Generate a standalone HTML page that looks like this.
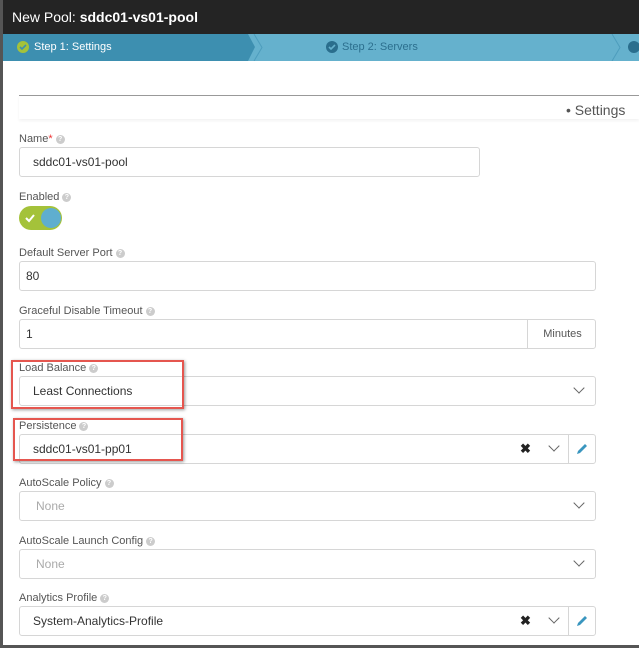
<!DOCTYPE html>
<html><head><style>
*{box-sizing:border-box;margin:0;padding:0}
body{width:639px;height:648px;overflow:hidden;background:#fff;font-family:"Liberation Sans",sans-serif;position:relative}
.a{position:absolute}
.lbl{position:absolute;left:19px;font-size:11px;color:#555}
.q{display:inline-block;width:9px;height:9px;border-radius:50%;background:#ccc;color:#fff;font-size:7px;line-height:9px;text-align:center;margin-left:3px;vertical-align:1px;font-weight:bold}
.in{position:absolute;left:19px;width:577px;height:30px;border:1px solid #d6d6d6;border-radius:3px;font-size:12px;color:#333;line-height:28px;padding-left:13px}
.chev{position:absolute;top:7px;width:8px;height:8px;border-right:1.3px solid #666;border-bottom:1.3px solid #666;transform:rotate(45deg)}
.red{position:absolute;border:2px solid #e5564f;box-shadow:1px 1px 3px rgba(0,0,0,.4)}
</style></head><body>
<div class="a" style="left:0;top:0;width:639px;height:34px;background:#242424"></div>
<div class="a" style="left:12px;top:9px;color:#fff;font-size:14px">New Pool: <b>sddc01-vs01-pool</b></div>
<div class="a" style="left:0;top:34px;width:639px;height:27px;background:#65b1cd"></div>
<div class="a" style="left:0;top:34px;width:255px;height:27px;background:#3d8fb0;clip-path:polygon(0 0,248px 0,255px 13px,248px 27px,0 27px)"></div>
<svg class="a" style="left:252px;top:34px" width="12" height="27"><path d="M2 0 L10 13.5 L2 27" stroke="#4d9dbd" fill="none"/></svg>
<svg class="a" style="left:610px;top:34px" width="12" height="27"><path d="M2 0 L10 13.5 L2 27" stroke="#4d9dbd" fill="none"/></svg>
<svg class="a" style="left:17px;top:41px" width="12" height="12"><circle cx="6" cy="6" r="6" fill="#a4c23a"/><path d="M3 6l2 2 4-4" stroke="#3d8fb0" stroke-width="1.6" fill="none"/></svg>
<div class="a" style="left:34px;top:41px;color:#fff;font-size:11px">Step 1: Settings</div>
<svg class="a" style="left:326px;top:41px" width="12" height="12"><circle cx="6" cy="6" r="6" fill="#2a6e8d"/><path d="M3 6l2 2 4-4" stroke="#65b1cd" stroke-width="1.6" fill="none"/></svg>
<div class="a" style="left:342px;top:41px;color:#2c6f8e;font-size:11px">Step 2: Servers</div>
<svg class="a" style="left:628px;top:41px" width="12" height="12"><circle cx="6" cy="6" r="6" fill="#2a6e8d"/></svg>
<div class="a" style="left:0;top:0;width:3px;height:648px;background:#555"></div>
<div class="a" style="left:0;top:645px;width:639px;height:3px;background:#555"></div>
<div class="a" style="left:19px;top:95px;width:620px;height:24px;border-top:1.5px solid #999;box-shadow:0 2px 3px rgba(0,0,0,.05)"></div>
<div class="a" style="left:566px;top:102px;font-size:14px;color:#555">• Settings</div>

<div class="lbl" style="top:133px">Name<span style="color:#e33">*</span><span class="q">?</span></div>
<div class="in" style="top:147px;width:461px">sddc01-vs01-pool</div>
<div class="lbl" style="top:191px">Enabled<span class="q">?</span></div>
<div class="a" style="left:19px;top:206px;width:43px;height:24px;border-radius:12px;background:#a4c23a"></div>
<div class="a" style="left:41px;top:208px;width:20px;height:20px;border-radius:50%;background:#5faecf"></div>
<svg class="a" style="left:24px;top:213px" width="12" height="10"><path d="M2 5l3 3 5-6" stroke="#fff" stroke-width="2" fill="none"/></svg>
<div class="lbl" style="top:247px">Default Server Port<span class="q">?</span></div>
<div class="in" style="top:261px;padding-left:6px">80</div>
<div class="lbl" style="top:305px">Graceful Disable Timeout<span class="q">?</span></div>
<div class="in" style="top:319px;padding-left:6px">1<div class="a" style="left:507px;top:-1px;width:70px;height:30px;line-height:30px;border-left:1px solid #d6d6d6;text-align:center;font-size:11px;color:#555">Minutes</div></div>
<div class="lbl" style="top:362px">Load Balance<span class="q">?</span></div>
<div class="in" style="top:376px">Least Connections<div class="chev" style="left:555px"></div></div>
<div class="red" style="left:11px;top:360px;width:173px;height:49px"></div>
<div class="lbl" style="top:420px">Persistence<span class="q">?</span></div>
<div class="in" style="top:434px">sddc01-vs01-pp01
<div class="a" style="left:500px;top:0;font-size:13px;font-weight:bold;color:#222">✖</div>
<div class="chev" style="left:530px"></div>
<div class="a" style="left:548px;top:-1px;width:28px;height:30px;border-left:1px solid #d6d6d6"></div>
<svg class="a" style="left:556px;top:8px" width="12" height="12"><path d="M1 11l1-3 7-7 2 2-7 7z" fill="#3a96bf"/></svg>
</div>
<div class="red" style="left:13px;top:418px;width:170px;height:43px"></div>
<div class="lbl" style="top:477px">AutoScale Policy<span class="q">?</span></div>
<div class="in" style="top:491px;color:#aaa;padding-left:16px">None<div class="chev" style="left:555px"></div></div>
<div class="lbl" style="top:535px">AutoScale Launch Config<span class="q">?</span></div>
<div class="in" style="top:549px;color:#aaa;padding-left:16px">None<div class="chev" style="left:555px"></div></div>
<div class="lbl" style="top:592px">Analytics Profile<span class="q">?</span></div>
<div class="in" style="top:606px">System-Analytics-Profile
<div class="a" style="left:500px;top:0;font-size:13px;font-weight:bold;color:#222">✖</div>
<div class="chev" style="left:530px"></div>
<div class="a" style="left:548px;top:-1px;width:28px;height:30px;border-left:1px solid #d6d6d6"></div>
<svg class="a" style="left:556px;top:8px" width="12" height="12"><path d="M1 11l1-3 7-7 2 2-7 7z" fill="#3a96bf"/></svg>
</div>
</body></html>
